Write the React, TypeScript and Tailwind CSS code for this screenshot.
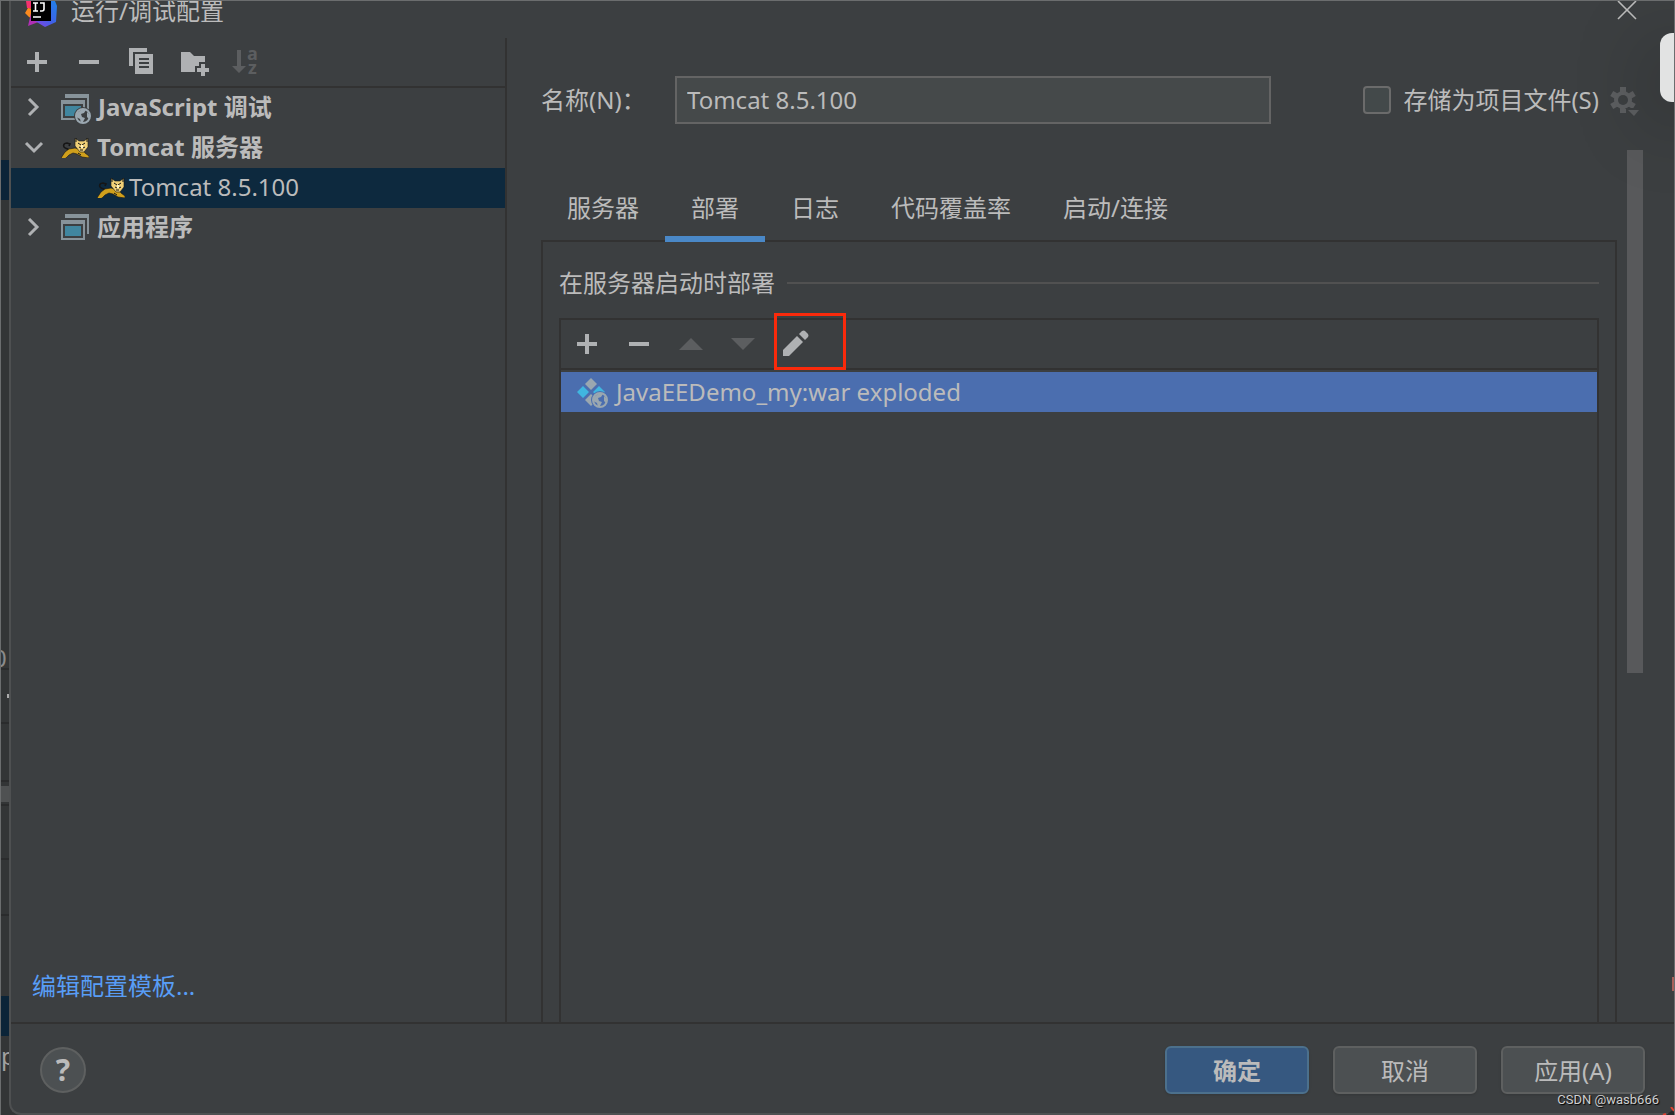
import { ReactNode } from "react";

type IconProps = { className?: string };

const PlusIcon = () => (
  <svg width="32" height="32" viewBox="0 0 32 32" fill="#afb1b3">
    <path d="M14 6h4v8h8v4h-8v8h-4v-8H6v-4h8z" />
  </svg>
);

const MinusIcon = () => (
  <svg width="32" height="32" viewBox="0 0 32 32" fill="#afb1b3">
    <path d="M6 14h20v4H6z" />
  </svg>
);

const CopyIcon = () => (
  <svg width="32" height="32" viewBox="0 0 32 32" fill="#afb1b3">
    <path d="M4 2h18v4H8v14H4z" />
    <path
      fillRule="evenodd"
      d="M10 8h18v20H10zM14 12v2h10v-2zM14 16v2h10v-2zM14 20v2h10v-2z"
    />
  </svg>
);

const FolderIcon = () => (
  <svg width="32" height="32" viewBox="0 0 32 32" fill="#afb1b3">
    <path d="M4 6h9l4 4h11v6h-6v4h-4v6H4z" />
    <path d="M24 18h4v4h4v4h-4v4h-4v-4h-4v-4h4z" />
  </svg>
);

const SortIcon = () => (
  <svg width="32" height="32" viewBox="0 0 32 32" fill="#5c5e60">
    <path d="M8 4h4v16h5l-7 7-7-7h5z" />
    <text x="18" y="14" fontFamily="Open Sans" fontSize="18" fontWeight="700">
      a
    </text>
    <text x="19" y="28" fontFamily="Open Sans" fontSize="18" fontWeight="700">
      z
    </text>
  </svg>
);

const PencilIcon = () => (
  <svg width="32" height="32" viewBox="0 0 32 32" fill="#afb1b3">
    <path d="M4 22 18 8l6 6L10 28H4z" />
    <path d="M20 6l3-3q2-1 3 0l3 3q1 2 0 3l-3 3z" />
  </svg>
);

const Chevron = ({ open }: { open?: boolean }) => (
  <svg width="20" height="20" viewBox="0 0 20 20" fill="none" stroke="#afb1b3" strokeWidth="3">
    {open ? <path d="M2 5l8 8 8-8" /> : <path d="M6 1l8 8-8 8" />}
  </svg>
);

const Globe = ({ cut }: { cut: string }) => (
  <>
    <circle cx="24" cy="24" r="9" fill={cut} />
    <circle cx="24" cy="24" r="7" fill={cut} stroke="#9aa7b0" strokeWidth="2" />
    <path d="M17 22l6-5 4 1-2 3-3 1 1 3 3 1-2 4-2 1-1-4-4-2z" fill="#9aa7b0" />
    <path d="M28 20l3 3-1 4-2-2z" fill="#9aa7b0" />
  </>
);

const AppIcon = ({ globe }: { globe?: boolean }) => (
  <svg width="32" height="32" viewBox="0 0 32 32" fill="#87939a">
    <path d="M6 2h24v20h-2V6H6z" />
    <path fillRule="evenodd" d="M2 8h24v20H2zM4 12v14h20V12z" />
    <path d="M6 14h16v10H6z" fill="#40869f" />
    {globe && <Globe cut="#3c3f41" />}
  </svg>
);

const TomcatIcon = ({ className }: IconProps) => (
  <svg className={className} width="28" height="20" viewBox="0 0 28 20">
    <path
      d="M8 13C8 10 4 11 3 9s0-4 3-4l3 1-1 2"
      fill="none"
      stroke="#161616"
      strokeWidth="1.6"
    />
    <path
      d="M0 20l4-6 4-3 6-1 8 2 2 3 4 3v2l-7-1-5-3-4-1-4 2-3 3-2 1z"
      fill="#d0a01c"
      stroke="#161616"
      strokeWidth="0.6"
    />
    <path
      d="M14 0l4 3h5l4-3v9l-4 5h-4l-5-6z"
      fill="#f0d077"
      stroke="#161616"
      strokeWidth="0.6"
    />
    <path
      d="M15 0v4M26 0v4M17 5l3 2M24 5l-3 2M18 9l2 1M24 9l-2 1M19 12h3M17 15l3 2"
      stroke="#161616"
      fill="none"
    />
    <path d="M20 7h2v3h-2z" fill="#fff3c0" />
  </svg>
);

const ArtifactIcon = () => (
  <svg width="32" height="32" viewBox="0 0 32 32">
    <path d="M15 2l6 6-6 6-6-6z" fill="#9aa7b0" />
    <path d="M7 10l6 6-6 6-6-6zM23 10l6 6-6 6-6-6z" fill="#40b6e0" />
    <path d="M15 18l6 6-6 6-6-6z" fill="#9aa7b0" />
    <Globe cut="#4b6eaf" />
  </svg>
);

const IdeaLogo = () => (
  <svg width="32" height="26" viewBox="0 0 32 26">
    <defs>
      <linearGradient id="blue" x1="0" y1="1" x2="1" y2="0">
        <stop offset="0" stopColor="#8a3fe0" />
        <stop offset="0.5" stopColor="#3d62e8" />
        <stop offset="1" stopColor="#1f84e8" />
      </linearGradient>
    </defs>
    <path d="M1 0h8v8L2 7z" fill="#f5316f" />
    <path d="M3 7l5 1v10l-4-2-4-4z" fill="#fb8a1f" />
    <path d="M6 12l10 8-13 5z" fill="#b02fb4" />
    <path d="M24 0h6l2 5-1 16-11 5-10-6z" fill="url(#blue)" />
    <path d="M6 0h20v20H6z" fill="#000" />
    <path
      d="M8 2h5M8 10h5M10.500 2v8M15 2h4v6q0 2-2 2h-2M8 16h8"
      stroke="#fff"
      strokeWidth="1.6"
      fill="none"
    />
  </svg>
);

const GearIcon = () => (
  <svg width="32" height="32" viewBox="0 0 32 32" fill="#5c5e60">
    <path d="M11 3h6v26h-6z" />
    <path d="M11 3h6v26h-6z" transform="rotate(60 14 16)" />
    <path d="M11 3h6v26h-6z" transform="rotate(120 14 16)" />
    <circle cx="14" cy="16" r="9" />
    <circle cx="14" cy="16" r="5" fill="#3c3f41" />
    <path d="M16 24h16l-8 8z" fill="#3c3f41" />
    <path d="M19 26h11l-5 6z" />
  </svg>
);

const ToolButton = ({ label, children }: { label: string; children: ReactNode }) => (
  <button type="button" aria-label={label} className="size-8">
    {children}
  </button>
);

const tabs = ["服务器", "部署", "日志", "代码覆盖率", "启动/连接"];

// slice of the main window that shows left of the dialog
const Behind = () => (
  <div className="flex w-[9px] shrink-0 flex-col overflow-hidden border-l border-[#6b6d6e] bg-[#333536] text-2xl text-[#8a8a8a]">
    <div className="mt-[159px] h-10 shrink-0 bg-[#0b2438]" />
    <div className="mt-[440px] h-7 shrink-0 -indent-2 leading-9">0</div>
    <div className="h-[2px] shrink-0 bg-[#2a2b2c]" />
    <div className="mt-6 ml-[6px] h-1 shrink-0 bg-[#aaaaaa]" />
    <div className="mt-6 h-[2px] shrink-0 bg-[#2a2b2c]" />
    <div className="mt-14 h-[2px] shrink-0 bg-[#2a2b2c]" />
    <div className="mt-1 h-4 shrink-0 bg-[#4f5152]" />
    <div className="mt-[2px] h-[2px] shrink-0 bg-[#2a2b2c]" />
    <div className="mt-[52px] h-[2px] shrink-0 bg-[#2a2b2c]" />
    <div className="mt-[54px] h-[2px] shrink-0 bg-[#2a2b2c]" />
    <div className="mt-20 h-10 shrink-0 bg-[#0b2438]" />
    <div className="h-10 shrink-0 leading-10 text-[#a0a0a0]">p</div>
  </div>
);

const Sidebar = () => (
  <aside className="flex w-[496px] shrink-0 flex-col border-r-2 border-[#323232]">
    <div className="flex h-[50px] shrink-0 gap-5 border-b-2 border-[#323232] pt-2 pl-[10px]">
      <ToolButton label="添加">
        <PlusIcon />
      </ToolButton>
      <ToolButton label="移除">
        <MinusIcon />
      </ToolButton>
      <ToolButton label="复制">
        <CopyIcon />
      </ToolButton>
      <ToolButton label="新建文件夹">
        <FolderIcon />
      </ToolButton>
      <ToolButton label="排序">
        <SortIcon />
      </ToolButton>
    </div>
    <ul className="flex-1 font-bold">
      <li className="flex h-10 items-center pl-3">
        <Chevron />
        <span className="ml-4 flex items-center gap-[7px]">
          <AppIcon globe />
          <span className="pb-[2px]">JavaScript 调试</span>
        </span>
      </li>
      <li className="flex h-10 items-center pl-[13px]">
        <Chevron open />
        <span className="ml-[17px] flex items-center gap-2">
          <TomcatIcon />
          <span className="pb-[2px]">Tomcat 服务器</span>
        </span>
      </li>
      <li className="flex h-10 items-center gap-1 bg-[#0d293e] pl-[86px] font-normal">
        <TomcatIcon />
        <span className="pb-[2px]">Tomcat 8.5.100</span>
      </li>
      <li className="flex h-10 items-center pl-3">
        <Chevron />
        <span className="ml-4 flex items-center gap-[6px]">
          <AppIcon />
          <span className="pb-[2px]">应用程序</span>
        </span>
      </li>
    </ul>
    <a href="#" className="mb-5 self-start pl-[21px] leading-8 text-[#589df6]">
      编辑配置模板...
    </a>
  </aside>
);

const Deployment = () => (
  <section className="flex min-h-0 flex-1 flex-col border-2 border-b-0 border-[#323232] px-4 pt-[23px]">
    <div className="flex items-center gap-3">
      <h2 className="leading-9">在服务器启动时部署</h2>
      <span className="h-[2px] flex-1 bg-[#515151]" />
    </div>
    <div className="mt-[17px] flex min-h-0 flex-1 flex-col border-2 border-b-0 border-[#323232]">
      <div className="relative flex h-[50px] shrink-0 items-center gap-5 border-b-2 border-[#323232] pl-[10px]">
        <ToolButton label="添加">
          <PlusIcon />
        </ToolButton>
        <ToolButton label="移除">
          <MinusIcon />
        </ToolButton>
        <ToolButton label="上移">
          <svg width="32" height="32" viewBox="0 0 32 32" fill="#5c5e60">
            <path d="M4 22h24L16 10z" />
          </svg>
        </ToolButton>
        <ToolButton label="下移">
          <svg width="32" height="32" viewBox="0 0 32 32" fill="#5c5e60">
            <path d="M4 10h24L16 22z" />
          </svg>
        </ToolButton>
        <ToolButton label="编辑">
          <PencilIcon />
        </ToolButton>
        <span className="absolute -top-[7px] left-[213px] h-[57px] w-[72px] border-3 border-[#fb2a0b]" />
      </div>
      <div className="mt-[2px] flex h-10 shrink-0 items-center gap-2 bg-[#4b6eaf] pl-[15px] leading-10">
        <ArtifactIcon />
        JavaEEDemo_my:war exploded
      </div>
    </div>
  </section>
);

const App = () => {
  return (
    <div className="relative flex h-screen overflow-hidden border-t border-r border-[#6b6d6e] bg-[#333536] font-['Noto_Sans','Noto_Sans_CJK_SC',sans-serif] text-2xl text-[#bbbbbb]">
      <Behind />
      <div className="flex min-w-0 flex-1 flex-col rounded-bl-xl border-b-2 border-l-2 border-[#4e5051] bg-[#3c3f41]">
        <header className="flex h-[37px] shrink-0 items-start pr-[37px] pl-[14px]">
          <IdeaLogo />
          <h1 className="ml-[14px] flex-1 leading-5">运行/调试配置</h1>
          <button type="button" aria-label="关闭">
            <svg width="20" height="20" viewBox="0 0 20 20" stroke="#bbbbbb" strokeWidth="1.6">
              <path d="M1 0l18 18M19 0L1 18" />
            </svg>
          </button>
        </header>

        <main className="flex min-h-0 flex-1">
          <Sidebar />
          <div className="flex min-w-0 flex-1 flex-col pl-[34px]">
            <div className="flex h-28 shrink-0 items-center pt-3 pr-[33px]">
              <label htmlFor="name" className="w-[134px] shrink-0">
                名称(N)：
              </label>
              <input
                id="name"
                type="text"
                defaultValue="Tomcat 8.5.100"
                className="h-12 min-w-0 flex-1 border-2 border-[#646464] bg-[#45494a] px-[10px] pb-[2px] outline-none"
              />
              <div className="ml-[92px] flex items-center">
                <input
                  id="store"
                  type="checkbox"
                  className="size-7 appearance-none rounded border-2 border-[#6b6b6b] bg-[#43494a]"
                />
                <label htmlFor="store" className="ml-3">
                  存储为项目文件(S)
                </label>
                <button type="button" aria-label="设置" className="ml-[10px]">
                  <GearIcon />
                </button>
              </div>
            </div>

            <div className="flex min-h-0 flex-1 pr-[31px]">
              <div className="flex min-w-0 flex-1 flex-col pt-[22px]">
                <div role="tablist" className="-mb-[2px] flex">
                  {tabs.map((tab) => (
                    <button
                      key={tab}
                      type="button"
                      role="tab"
                      aria-selected={tab === "部署"}
                      className={
                        tab === "部署"
                          ? "relative h-[70px] border-b-6 border-[#4a88c7] px-[26px] pt-2"
                          : "h-[70px] px-[26px] pt-[2px]"
                      }
                    >
                      {tab}
                    </button>
                  ))}
                </div>
                <Deployment />
              </div>
              <div className="ml-[10px] w-4 shrink-0">
                <div className="h-3/5 bg-[#58595b]" />
              </div>
            </div>
          </div>
        </main>

        <footer className="flex h-[91px] shrink-0 items-start border-t-2 border-[#323232] pt-[22px] pr-[29px] pl-[29px]">
          <button
            type="button"
            aria-label="帮助"
            className="mt-px size-[46px] rounded-full border-2 border-[#5e6060] bg-[#4c5052] text-3xl leading-none font-bold"
          >
            ?
          </button>
          <div className="ml-auto flex gap-6">
            <button
              type="button"
              className="h-12 w-36 rounded-md border-2 border-[#4c708c] bg-[#365880] pt-[2px] font-bold shadow-sm"
            >
              确定
            </button>
            <button type="button" className="h-12 w-36 rounded-md border-2 border-[#5e6060] bg-[#4c5052] pt-[2px] shadow-sm">
              取消
            </button>
            <button type="button" className="h-12 w-36 rounded-md border-2 border-[#5e6060] bg-[#4c5052] pt-[2px] shadow-sm">
              应用(A)
            </button>
          </div>
        </footer>
      </div>

      <div className="absolute top-8 -right-5 h-[69px] w-[34px] rounded-xl bg-[#e2e3e3] shadow-[0_16px_80px_rgba(0,0,0,0.4)]" />
      <div className="absolute right-0 bottom-[124px] h-[14px] w-[2px] bg-[#a8605a]" />
      <svg className="absolute right-0 bottom-0" width="12" height="8" viewBox="0 0 12 8">
        <path d="M12 2v6H4z" fill="#26282a" />
        <path d="M9 0l3 4M1 8l3-1" stroke="#e0402f" strokeWidth="2" />
      </svg>
      <span className="absolute right-[15px] bottom-[7px] font-[Roboto,sans-serif] text-[13px] leading-4 text-[#d0d0d0] [text-shadow:1px_1px_1px_#000]">
        CSDN @wasb666
      </span>
    </div>
  );
};

export default App;
